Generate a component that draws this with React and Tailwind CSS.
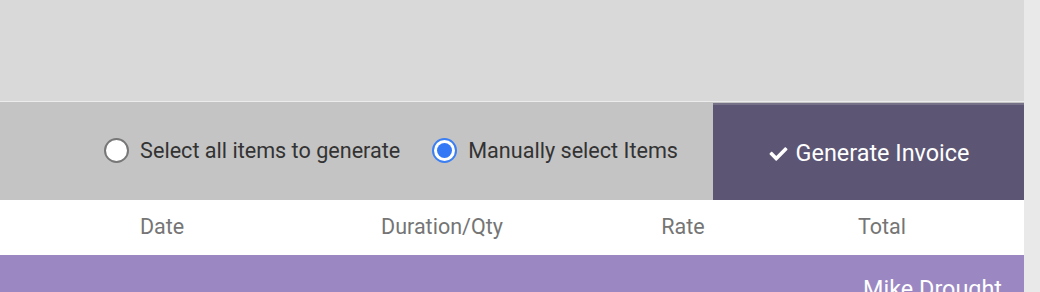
import React from "react";

export default function App() {
  return (
    <div className="flex w-[1040px] h-[292px] overflow-hidden bg-[#e9e9e9]" style={{ fontFamily: "Roboto, 'Liberation Sans', sans-serif" }}>
      <div className="w-[1024px] flex flex-col">
        <div className="h-[101px] shrink-0 bg-[#d9d9d9]" />
        <div className="h-px shrink-0 bg-[#ececec]" />
        <div className="h-[98px] shrink-0 flex bg-[#c4c4c4]">
          <div className="flex-1 flex items-center justify-end pr-[35px] gap-[32px] text-[21.6px] text-[#333333]">
            <label className="flex items-center gap-[11px]">
              <span className="w-[25px] h-[25px] rounded-full bg-white border-2 border-[#777777]" />
              <span>Select all items to generate</span>
            </label>
            <label className="flex items-center gap-[11px]">
              <span className="w-[25px] h-[25px] rounded-full bg-white border-2 border-[#3b7ff2] flex items-center justify-center">
                <span className="w-[15px] h-[15px] rounded-full bg-[#3478f6]" />
              </span>
              <span>Manually select Items</span>
            </label>
          </div>
          <div className="w-[311px] mt-px flex flex-col bg-[#5d5574]">
            <div className="h-[2px] bg-[#777089]" />
            <div className="flex-1 flex items-center justify-center gap-[7px] text-white text-[23.4px] pt-[2px]">
              <svg width="21" height="18" viewBox="0 0 512 512" fill="white">
                <path d="M173.9 439.4l-166.4-166.4c-10-10-10-26.2 0-36.2l36.2-36.2c10-10 26.2-10 36.2 0L192 312.7 432.1 72.6c10-10 26.2-10 36.2 0l36.2 36.2c10 10 10 26.2 0 36.2L210.1 439.4c-10 10-26.2 10-36.2 0z" />
              </svg>
              <span>Generate Invoice</span>
            </div>
          </div>
        </div>
        <div className="h-[55px] shrink-0 bg-white flex items-center text-[21.5px] text-[#757575] pb-[1px]">
          <div className="w-[324px] text-center">Date</div>
          <div className="w-[236px] text-center">Duration/Qty</div>
          <div className="w-[246px] text-center">Rate</div>
          <div className="w-[152px] text-center">Total</div>
        </div>
        <div className="flex-1 min-h-0 overflow-hidden bg-[#9b88c3] flex justify-end items-start pr-[22px] pt-[23px] text-white text-[23.4px] leading-none">
          <span className="shrink-0">Mike Drought</span>
        </div>
      </div>
    </div>
  );
}
